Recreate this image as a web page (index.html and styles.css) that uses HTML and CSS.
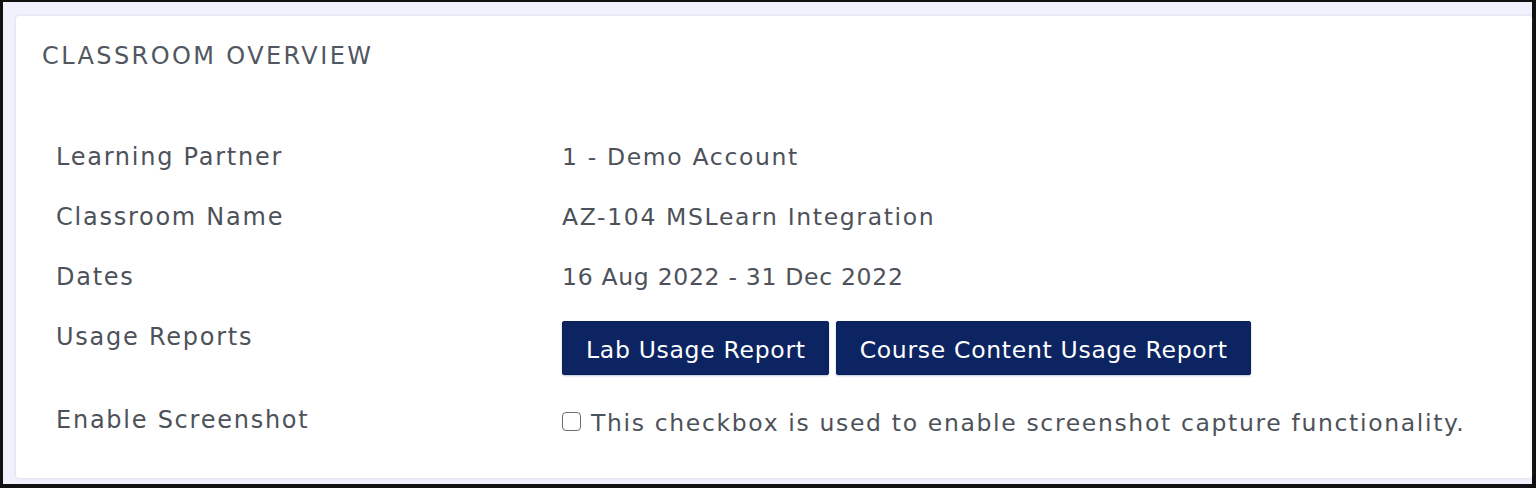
FILE: index.html
```html
<!DOCTYPE html>
<html lang="en">
<head>
<meta charset="utf-8">
<title>Classroom Overview</title>
<link rel="stylesheet" href="styles.css">
</head>
<body>
<div class="frame">
  <div class="card">
    <h2 class="title">CLASSROOM OVERVIEW</h2>
    <div class="rows">
      <div class="row">
        <div class="label">Learning Partner</div>
        <div class="value">1 - Demo Account</div>
      </div>
      <div class="row">
        <div class="label">Classroom Name</div>
        <div class="value">AZ-104 MSLearn Integration</div>
      </div>
      <div class="row">
        <div class="label">Dates</div>
        <div class="value value-dates">16 Aug 2022 - 31 Dec 2022</div>
      </div>
      <div class="row">
        <div class="label">Usage Reports</div>
        <div class="value buttons">
          <button class="btn" type="button">Lab Usage Report</button>
          <button class="btn" type="button">Course Content Usage Report</button>
        </div>
      </div>
      <div class="row">
        <div class="label">Enable Screenshot</div>
        <label class="value check">
          <span class="box"></span>
          <span class="check-text">This checkbox is used to enable screenshot capture functionality.</span>
        </label>
      </div>
    </div>
  </div>
</div>
</body>
</html>
```
FILE: styles.css
```css
* { box-sizing: border-box; }
html, body { margin: 0; padding: 0; }
body {
  background: #111;
  width: 1536px;
  height: 488px;
  padding: 2px 4px 4px 3px;
  font-family: "DejaVu Sans", Inter, sans-serif;
  color: #4d525a;
}
.frame {
  background: #f0f1fc;
  height: 100%;
  padding: 14px 0 6px 13px;
}
.card {
  background: #fff;
  height: 100%;
  border-radius: 3px;
  box-shadow: 0 0 3px rgba(120, 125, 160, 0.25);
  padding: 26px 26px 0 26px;
}
.title {
  margin: 0;
  font-size: 24px;
  font-weight: 400;
  line-height: 28px;
  color: #52575f;
  letter-spacing: 2.4px;
}
.rows {
  margin-top: 57px;
  padding-left: 14px;
}
.row {
  display: flex;
  align-items: flex-start;
  padding: 15px 0;
  font-size: 23.5px;
  line-height: 30px;
  letter-spacing: 1.65px;
}
.label {
  width: 506px;
  flex: none;
  font-size: 24px;
  letter-spacing: 1.75px;
}
.value { flex: 1; }
.value-dates { letter-spacing: 0.7px; }
.buttons {
  display: flex;
  gap: 7px;
  margin-top: -1px;
}
.btn {
  height: 54px;
  padding: 3px 22px 0 23px;
  background: #0c2461;
  color: #fff;
  border: 1px solid #0a1f55;
  border-radius: 2px;
  font-family: inherit;
  font-size: 23.5px;
  letter-spacing: 0.7px;
  box-shadow: 0 1px 2px rgba(60, 90, 160, 0.35);
}
.check {
  display: flex;
  align-items: center;
  gap: 10px;
}
.box {
  width: 19px;
  height: 19px;
  border: 1.5px solid #6a6e74;
  border-radius: 4px;
  flex: none;
  margin-top: -1px;
}
.check-text { padding-top: 3px; }
```
